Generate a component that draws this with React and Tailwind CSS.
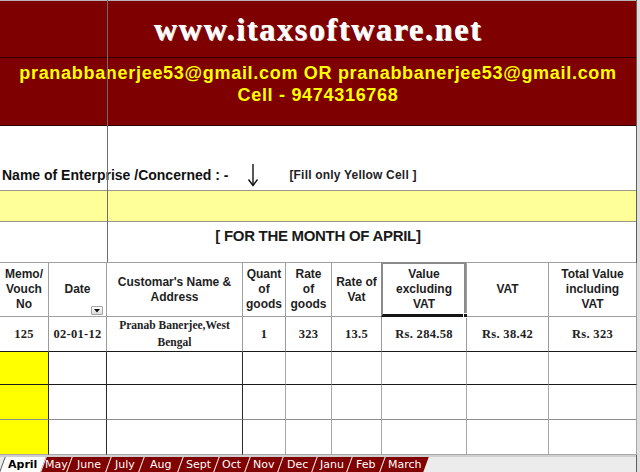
const SANS = { fontFamily: '"Liberation Sans", Arial, sans-serif' };
const SERIF = { fontFamily: '"Liberation Serif", "Times New Roman", serif' };
const TAB_FONT = { fontFamily: '"DejaVu Sans", Verdana, sans-serif' };

const HEADERS = [
  ['Memo/', 'Vouch', 'No'],
  ['Date'],
  ["Customar's Name &", 'Address'],
  ['Quant', 'of', 'goods'],
  ['Rate', 'of', 'goods'],
  ['Rate of', 'Vat'],
  ['Value', 'excluding', 'VAT'],
  ['VAT'],
  ['Total Value', 'including', 'VAT'],
];

const ROW = ['125', '02-01-12', 'Pranab Banerjee,West Bengal', '1', '323', '13.5', 'Rs. 284.58', 'Rs. 38.42', 'Rs. 323'];

const EMPTY_ROWS = [
  { h: 'h-[33px]', line: 'border-b-[#1a1a1a]' },
  { h: 'h-[35px]', line: 'border-b-[#8c8c8c]' },
  { h: 'h-[35px]', line: 'border-b-[#a8a8a8]' },
];

const TABS = [
  ['May', 'w-[26px]'],
  ['June', 'w-[39px]'],
  ['July', 'w-[33px]'],
  ['Aug', 'w-[39px]'],
  ['Sept', 'w-[36px]'],
  ['Oct', 'w-[31px]'],
  ['Nov', 'w-[33px]'],
  ['Dec', 'w-[34px]'],
  ['Janu', 'w-[35px]'],
  ['Feb', 'w-[33px]'],
  ['March', 'w-[44px]'],
];

const GRID = 'grid grid-cols-[49px_58px_136px_43px_46px_50px_85px_82px_88px]';

const DownArrow = () => (
  <svg width="14" height="24" viewBox="0 0 14 24" className="shrink-0">
    <path d="M7 1 V22" stroke="#111" strokeWidth="1.4" fill="none" />
    <path d="M2.5 16.5 L7 22.5 L11.5 16.5" stroke="#111" strokeWidth="1.4" fill="none" />
  </svg>
);

const App = () => {
  return (
    <div className="relative flex w-[640px] h-[472px] overflow-hidden bg-white">
      <div className="flex flex-col w-[637px] border-r border-[#5e5e5e]">
        <div className="h-px bg-[#b4b4b4]" />

        {/* site banner */}
        <div className="h-[57px] flex items-center justify-center bg-[#7e0000] border-b border-[#2e0000]">
          <span
            className="text-white font-bold text-[32px] leading-none tracking-[1.7px] [text-shadow:1px_1px_0_#d8d8d8]"
            style={SERIF}
          >
            www.itaxsoftware.net
          </span>
        </div>

        {/* contact */}
        <div
          className="h-[68px] flex flex-col items-center pt-[4px] bg-[#7e0000] border-b border-[#2e0000] text-[#ffff00] font-bold text-[18px] leading-[22px] tracking-[0.7px]"
          style={SANS}
        >
          <span>pranabbanerjee53@gmail.com OR pranabbanerjee53@gmail.com</span>
          <span>Cell - 9474316768</span>
        </div>

        {/* enterprise line */}
        <div className="h-[64px] flex items-end pb-[4px] pl-[2px]" style={SANS}>
          <span className="font-bold text-[14px] leading-[18px] text-[#111] pb-[2px]">
            Name of Enterprise /Concerned : -
          </span>
          <span className="ml-[18px] mb-[-1px]">
            <DownArrow />
          </span>
          <span className="ml-[29px] font-bold text-[12px] tracking-[0.2px] leading-[18px] text-[#222] pb-[2px]">
            [Fill only Yellow Cell ]
          </span>
        </div>

        <div className="h-[32px] bg-[#ffff99] border-y border-[#9a9a86]" />

        <div className="h-[28px] flex items-center justify-center" style={SANS}>
          <span className="font-bold text-[15px] text-[#1a1a1a] tracking-[-0.3px]">[ FOR THE MONTH OF APRIL]</span>
        </div>
        <div className="h-[12px]" />

        {/* table */}
        <div className="border-t border-[#a0a0a0]">
          <div className={GRID} style={SANS}>
            {HEADERS.map((lines, i) => (
              <div
                key={i}
                className="relative h-[54px] flex flex-col items-center justify-center text-center border-r border-b border-[#a0a0a0] font-bold text-[12px] leading-[15px] text-[#1e1e1e]"
              >
                {lines.map((l) => (
                  <span key={l} className="whitespace-nowrap">{l}</span>
                ))}
                {i === 1 && (
                  <span className="absolute right-[3px] bottom-[1px] w-[12px] h-[9px] flex items-center justify-center border border-[#a2a2a2] rounded-[1px] bg-gradient-to-b from-white to-[#dcdcdc]">
                    <svg width="6" height="4" viewBox="0 0 6 4">
                      <path d="M0 0 H6 L3 3.5 Z" fill="#111" />
                    </svg>
                  </span>
                )}
                {i === 6 && (
                  <span className="absolute -left-px -top-px right-0 bottom-[-1px] border-2 border-[#8a8a8a] border-b-[3px] border-b-[#151515]">
                    <span className="absolute -right-[4px] -bottom-[4px] w-[5px] h-[5px] bg-[#151515] border border-white" />
                  </span>
                )}
              </div>
            ))}
          </div>

          <div className={GRID} style={SERIF}>
            {ROW.map((v, i) => (
              <div
                key={i}
                className={`h-[35px] flex items-center justify-center text-center border-r border-b border-r-[#9a9a9a] border-b-[#1a1a1a] font-bold text-[#222] ${
                  i === 2
                    ? 'px-[6px] text-[11.5px] leading-[17px]'
                    : 'px-[1px] whitespace-nowrap text-[12.5px] tracking-[0.3px] leading-none'
                }`}
              >
                {v}
              </div>
            ))}
          </div>

          {EMPTY_ROWS.map((r, ri) => (
            <div key={ri} className={GRID}>
              {HEADERS.map((_, i) => (
                <div
                  key={i}
                  className={`${r.h} border-r border-b ${r.line} ${
                    i < 3 ? 'border-r-[#2a2a2a]' : 'border-r-[#a8a8a8]'
                  } ${i === 0 ? 'bg-[#ffff00]' : ''}`}
                />
              ))}
            </div>
          ))}
        </div>

        <div className="h-[2px] bg-[#d0d0d0]" />

        {/* sheet tabs */}
        <div className="h-[15px] flex items-stretch bg-[#ececec] pl-[2px]" style={TAB_FONT}>
          <div className="w-[41px] -skew-x-[20deg] bg-white border-l border-[#555] flex items-center justify-center">
            <span className="skew-x-[20deg] font-bold text-[11px] leading-none text-black">April</span>
          </div>
          {TABS.map(([name, w]) => (
            <div
              key={name}
              className={`${w} -skew-x-[20deg] bg-[#800000] border-l border-[#f2f2f2] flex items-center justify-center`}
            >
              <span className="skew-x-[20deg] text-[11px] leading-none text-white">{name}</span>
            </div>
          ))}
        </div>
      </div>
      <div className="w-[3px] bg-[#dedede]" />

      {/* frozen pane divider */}
      <div className="absolute left-[107px] top-0 h-[262px] w-px bg-[#6e6e6e]" />
    </div>
  );
};

export default App;
